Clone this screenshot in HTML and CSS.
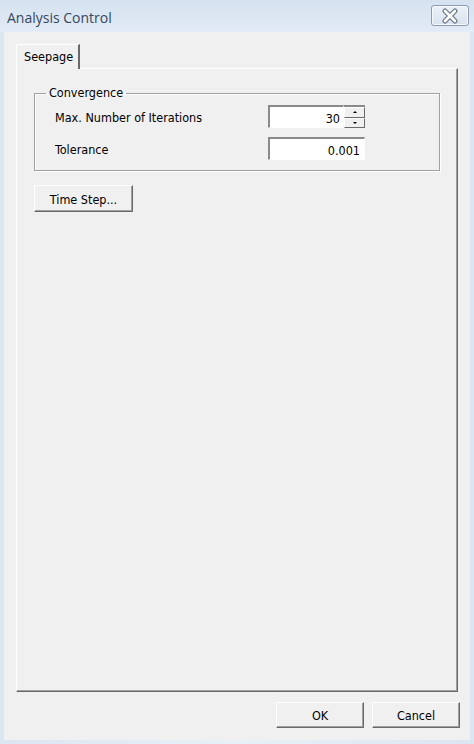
FILE: index.html
```html
<!DOCTYPE html>
<html lang="en">
<head>
  <meta charset="UTF-8" />
  <title>Analysis Control</title>
  <link rel="stylesheet" href="styles.css">
</head>
<body>

  <div class="window">
    <div class="titlebar">
      <span class="title">Analysis Control</span>
      <button class="close-btn" aria-label="Close">
        <svg width="18" height="16" viewBox="0 0 18 16">
          <path d="M4 3 L14 13 M14 3 L4 13" stroke="#6b7889" stroke-width="5" stroke-linecap="round" fill="none" />
          <path d="M4 3 L14 13 M14 3 L4 13" stroke="#ffffff" stroke-width="2.6" stroke-linecap="round" fill="none" />
        </svg>
      </button>
    </div>

    <div class="client">
      <div class="tabs">
        <div class="tab active">Seepage</div>
      </div>

      <div class="tab-panel">
        <fieldset class="group">
          <legend>Convergence</legend>
          <div class="field-row">
            <label for="iterInput">Max. Number of Iterations</label>
            <div class="spin">
              <input type="text" id="iterInput" class="num spin-input" value="30" />
              <div class="spin-btns">
                <button class="spin-btn up" aria-label="Up"></button>
                <button class="spin-btn down" aria-label="Down"></button>
              </div>
            </div>
          </div>
          <div class="field-row">
            <label for="tolInput">Tolerance</label>
            <input type="text" id="tolInput" class="num" value="0.001" />
          </div>
        </fieldset>

        <button class="btn time-step">Time Step...</button>
      </div>

      <div class="footer">
        <button class="btn dlg-btn">OK</button>
        <button class="btn dlg-btn">Cancel</button>
      </div>
    </div>
  </div>

</body>
</html>
```

FILE: styles.css
```css
body {
  margin: 0;
  font-family: "DejaVu Sans Condensed", "DejaVu Sans", sans-serif;
  font-stretch: condensed;
  font-size: 12.5px;
  color: #000;
}

.window {
  width: 474px;
  height: 744px;
  box-sizing: border-box;
  padding: 0 4px 4px 4px;
  display: flex;
  flex-direction: column;
  background: linear-gradient(to right, #dbe6f2, #e8eff8 50%, #dbe6f2);
}

.titlebar {
  height: 32px;
  flex: none;
  display: flex;
  align-items: center;
  justify-content: space-between;
  background: linear-gradient(to bottom, #d6e2f0, #e2ebf6);
  margin: 0 -4px;
  padding: 0 5px 0 7px;
}

.title {
  font-family: "Open Sans", "Noto Sans", sans-serif;
  font-stretch: normal;
  font-size: 14px;
  color: #34475c;
  margin-top: 2px;
}

.close-btn {
  width: 38px;
  height: 21px;
  margin-top: -1px;
  padding: 0;
  border: 1px solid #8b9cb3;
  border-radius: 3px;
  background: linear-gradient(to bottom, #edf2f8, #d8e2ee);
  box-shadow: inset 0 0 0 1px #f6f9fc;
  display: flex;
  align-items: center;
  justify-content: center;
}

.client {
  flex: 1;
  display: flex;
  flex-direction: column;
  background: #f0f0f0;
  padding: 12px 12px 12px 12px;
}

.tabs {
  display: flex;
  height: 24px;
  flex: none;
}

.tab {
  width: 64px;
  box-sizing: border-box;
  padding: 4px 0 0 7px;
  border-top: 1px solid #fff;
  border-left: 1px solid #fff;
  border-right: 2px solid #696969;
  position: relative;
  z-index: 1;
  background: #f0f0f0;
  margin-bottom: -1px;
}

.tab-panel {
  flex: 1;
  border-top: 1px solid #fff;
  border-left: 1px solid #fff;
  border-right: 1px solid #696969;
  border-bottom: 1px solid #696969;
  box-shadow: inset -1px -1px 0 #a0a0a0;
  padding: 17px 0 0 17px;
}

.group {
  width: 406px;
  box-sizing: border-box;
  margin: 0;
  padding: 5px 0 10px 20px;
  border: 1px solid #a0a0a0;
  box-shadow: 1px 1px 0 #fff, inset 1px 1px 0 #fff;
  display: flex;
  flex-direction: column;
  gap: 9px;
}

.group legend {
  line-height: 14px;
  padding: 0 3px;
  margin-left: -9px;
}

.field-row {
  display: flex;
  align-items: center;
  height: 23px;
}

.field-row label {
  width: 213px;
  padding-top: 2px;
}

.num {
  box-sizing: border-box;
  width: 97px;
  height: 23px;
  margin: 0;
  padding: 2px 4px 0 0;
  text-align: right;
  font: inherit;
  background: #fff;
  border-top: 2px solid #8a8a8a;
  border-left: 2px solid #8a8a8a;
  border-right: 1px solid #fff;
  border-bottom: 1px solid #fff;
  outline: none;
}

.spin {
  display: flex;
}

.spin-input {
  width: 76px;
  padding-right: 3px;
}

.spin-btns {
  width: 21px;
  height: 23px;
  display: flex;
  flex-direction: column;
  background: #fff;
  border-top: 2px solid #8a8a8a;
  box-sizing: border-box;
}

.spin-btn {
  flex: 1;
  margin: 0;
  padding: 0;
  background: #f0f0f0;
  border-top: 1px solid #fff;
  border-left: 1px solid #fff;
  border-right: 1px solid #696969;
  border-bottom: 1px solid #696969;
  position: relative;
}

.spin-btn::after {
  content: "";
  position: absolute;
  left: 8px;
  top: 3px;
  border-left: 2px solid transparent;
  border-right: 2px solid transparent;
}

.spin-btn.up::after {
  border-bottom: 2px solid #000;
}

.spin-btn.down::after {
  border-top: 2px solid #000;
}

.btn {
  font: inherit;
  color: #000;
  background: #f0f0f0;
  border-top: 1px solid #fff;
  border-left: 1px solid #fff;
  border-right: 1px solid #696969;
  border-bottom: 1px solid #696969;
  box-shadow: inset -1px -1px 0 #a0a0a0;
  padding: 1px 0 0 0;
  margin: 0;
}

.time-step {
  display: block;
  width: 99px;
  height: 27px;
  margin-top: 14px;
}

.footer {
  flex: none;
  display: flex;
  justify-content: flex-end;
  gap: 8px;
  margin: 10px -2px 0 0;
}

.dlg-btn {
  width: 88px;
  height: 26px;
}
```
